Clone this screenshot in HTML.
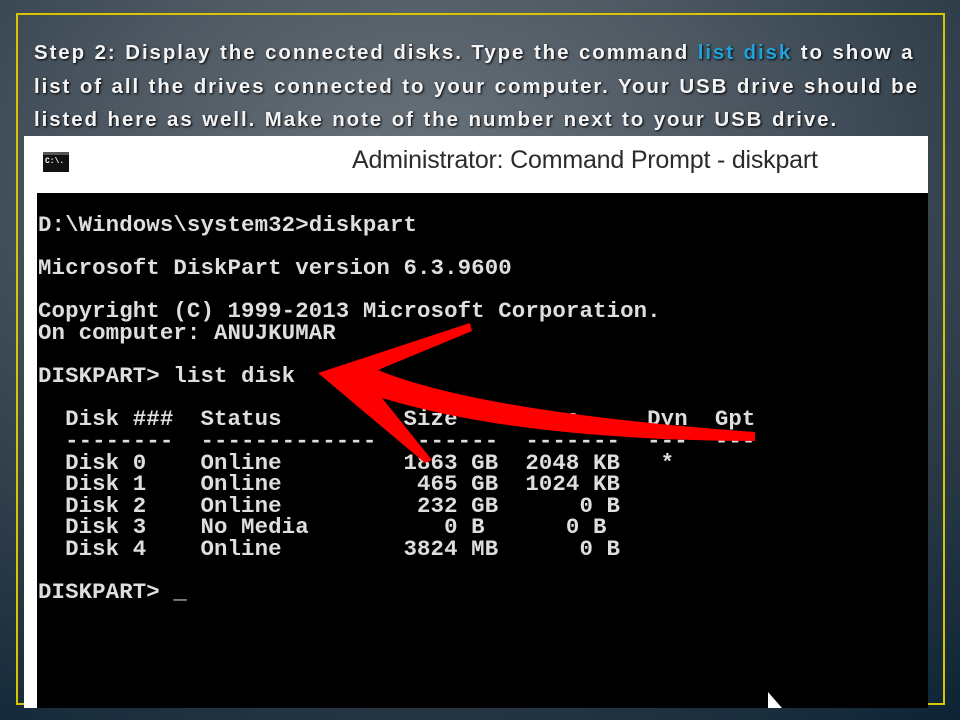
<!DOCTYPE html>
<html><head><meta charset="utf-8"><style>
html,body{margin:0;padding:0}
body{width:960px;height:720px;position:relative;overflow:hidden;
background:radial-gradient(ellipse 900px 700px at 420px 180px,#6b747c 0%,#4d5862 35%,#2a3946 70%,#0a2233 100%);
font-family:"Liberation Sans",sans-serif}
.frame{position:absolute;left:16px;top:13px;width:929px;height:692px;border:2px solid #d8c400;box-sizing:border-box}
.title{position:absolute;left:34px;top:36px;width:920px;white-space:nowrap;color:#f4f4f4;font-size:20.5px;font-weight:bold;letter-spacing:1.9px;word-spacing:1px;line-height:33.5px;text-shadow:1px 1px 2px #000}
.title span{color:#1fa3dc}
.shot{position:absolute;left:24px;top:136px;width:904px;height:572px;background:#fff}
.bar{position:absolute;left:0;top:0;width:904px;height:57px;background:#fff}
.icon{position:absolute;left:19px;top:16px;width:26px;height:20px;background:#111;border-top:3px solid #555;box-sizing:border-box;color:#fff;font:bold 8px "Liberation Mono",monospace;line-height:14px;padding-left:2px}
.bt{position:absolute;left:328px;top:10px;font-size:25px;color:#2b2b2b;letter-spacing:-0.2px}
.term{position:absolute;left:13px;top:57px;width:891px;height:515px;background:#000}
pre{position:absolute;left:1px;top:22px;margin:0;color:#dedede;font:bold 22.4px "Liberation Mono",monospace;line-height:21.6px;letter-spacing:0.1px}
svg{position:absolute;left:0;top:0}
</style></head><body>
<div class="frame"></div>
<div class="title">Step 2: Display the connected disks. Type the command <span>list disk</span> to show a<br>list of all the drives connected to your computer. Your USB drive should be<br>listed here as well. Make note of the number next to your USB drive.</div>
<div class="shot">
<div class="bar"><div class="icon">C:\.</div><div class="bt">Administrator: Command Prompt - diskpart</div></div>
<div class="term"><pre>D:\Windows\system32&gt;diskpart

Microsoft DiskPart version 6.3.9600

Copyright (C) 1999-2013 Microsoft Corporation.
On computer: ANUJKUMAR

DISKPART&gt; list disk

  Disk ###  Status         Size     Free     Dyn  Gpt
  --------  -------------  -------  -------  ---  ---
  Disk 0    Online         1863 GB  2048 KB   *
  Disk 1    Online          465 GB  1024 KB
  Disk 2    Online          232 GB      0 B
  Disk 3    No Media          0 B      0 B
  Disk 4    Online         3824 MB      0 B

DISKPART&gt; _</pre></div>
</div>
<svg width="960" height="720" viewBox="0 0 960 720">
<path d="M318 373 L470 323 L472 331 L378 370 Q480 412 755 432 L755 441 Q520 440 382 398 L432 460 L425 463 Z" fill="#f00"/>
<path d="M768 692 L768 708 L782 708 Z" fill="#fff"/>
</svg>
</body></html>
